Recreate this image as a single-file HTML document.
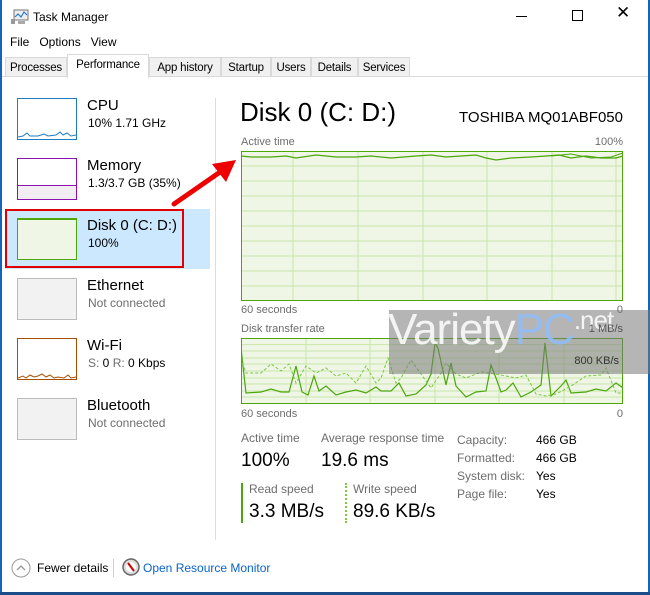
<!DOCTYPE html>
<html><head><meta charset="utf-8"><style>
*{margin:0;padding:0;box-sizing:border-box}
body{width:650px;height:595px;overflow:hidden;background:#fff;font-family:"Liberation Sans",sans-serif;position:relative;color:#000}
.a{position:absolute;white-space:nowrap}
.g{color:#6d6d6d}
.thumb{position:absolute;left:17px;width:60px;height:42px;border:1px solid #bbb;background:#f2f2f2}
.nm{font-size:15px}
.sb{font-size:12px}
.tab{position:absolute;top:57px;height:20px;border:1px solid #d9d9d9;background:#f0f0f0;font-size:11.5px;padding:4px 0 0 0;white-space:nowrap;text-align:center;letter-spacing:-0.2px;overflow:hidden}
</style></head><body>
<div class="a" style="left:0;top:0;width:2px;height:595px;background:#1565b7"></div>
<div class="a" style="right:0;top:0;width:2px;height:595px;background:#1565b7"></div>
<div class="a" style="left:0;bottom:0;width:650px;height:3px;background:#1a4d8a"></div>
<!-- title -->
<svg class="a" style="left:11px;top:9px" width="18" height="16"><rect x="3" y="1" width="14" height="10" fill="#eee" stroke="#777"/><polyline points="4,8 7,5 10,8 13,3 16,6" fill="none" stroke="#2a7ad0" stroke-width="1.2"/><rect x="0" y="10" width="4" height="5" fill="#999"/><rect x="7" y="12" width="7" height="3" fill="#aaa"/></svg>
<div class="a" style="left:33px;top:10px;font-size:12px">Task Manager</div>
<div class="a" style="left:516px;top:16px;width:11px;height:1px;background:#000"></div>
<div class="a" style="left:572px;top:10px;width:11px;height:11px;border:1px solid #000"></div>
<div class="a" style="left:616px;top:3px;font-size:17px">✕</div>
<div class="a" style="left:10px;top:35px;font-size:12px">File&nbsp;&nbsp;&nbsp;Options&nbsp;&nbsp;&nbsp;View</div>
<!-- tabs -->
<div class="a" style="left:2px;top:76px;width:646px;height:1px;background:#d9d9d9"></div>
<div class="tab" style="left:5px;width:62px">Processes</div>
<div class="tab" style="left:67px;top:54px;height:24px;width:82px;background:#fff;border-bottom:none;padding-top:4px">Performance</div>
<div class="tab" style="left:149px;width:72px">App history</div>
<div class="tab" style="left:221px;width:50px">Startup</div>
<div class="tab" style="left:271px;width:40px">Users</div>
<div class="tab" style="left:311px;width:47px">Details</div>
<div class="tab" style="left:358px;width:52px">Services</div>
<!-- left -->
<div class="a" style="left:215px;top:98px;width:1px;height:442px;background:#ddd"></div>
<div class="thumb" style="top:98px;background:#fff;border-color:#1f7bbf"><svg width="58" height="40"><polyline points="0,38 5,37 9,34 12,37 20,37 26,35 30,37 38,36 42,33 45,36 49,34 53,37 58,36" fill="none" stroke="#1f7bbf"/></svg></div>
<div class="a nm" style="left:87px;top:97px">CPU</div><div class="a sb" style="left:88px;top:116px">10% 1.71 GHz</div>
<div class="thumb" style="top:158px;background:#fff;border-color:#8b12ae"><div style="position:absolute;left:0;top:26px;width:58px;height:14px;background:#f1edf3;border-top:1px solid #8b12ae"></div></div>
<div class="a nm" style="left:87px;top:157px">Memory</div><div class="a sb" style="left:88px;top:176px">1.3/3.7 GB (35%)</div>
<div class="a" style="left:5px;top:209px;width:205px;height:60px;background:#cce8ff"></div>
<div class="a" style="left:5px;top:209px;width:179px;height:59px;border:2px solid #e00000"></div>
<div class="thumb" style="top:218px;background:#eff6e6;border-color:#4ca60c;border-top:2px solid #4ca60c"></div>
<div class="a nm" style="left:87px;top:217px">Disk 0 (C: D:)</div><div class="a sb" style="left:88px;top:236px">100%</div>
<div class="thumb" style="top:278px"></div>
<div class="a nm" style="left:87px;top:277px">Ethernet</div><div class="a sb g" style="left:88px;top:296px">Not connected</div>
<div class="thumb" style="top:338px;background:#fff;border-color:#a74f01"><svg width="58" height="40"><polyline points="0,39 5,37 8,39 12,36 16,38 20,37 24,35 28,38 32,36 36,39 40,38 46,39 50,36 53,39 58,38" fill="none" stroke="#a74f01"/></svg></div>
<div class="a nm" style="left:87px;top:337px">Wi-Fi</div><div class="a sb" style="left:88px;top:356px"><span class="g">S:</span> 0 <span class="g">R:</span> 0 Kbps</div>
<div class="thumb" style="top:398px"></div>
<div class="a nm" style="left:87px;top:397px">Bluetooth</div><div class="a sb g" style="left:88px;top:416px">Not connected</div>
<!-- arrow -->
<svg class="a" style="left:168px;top:155px" width="72" height="55"><line x1="6" y1="49" x2="55" y2="15" stroke="#e00" stroke-width="5" stroke-linecap="round"/><polygon points="68,5 44,9 58,27" fill="#e00"/></svg>
<!-- right -->
<div class="a" style="left:240px;top:97px;font-size:26px">Disk 0 (C: D:)</div>
<div class="a" style="right:27px;top:109px;font-size:15px">TOSHIBA MQ01ABF050</div>
<div class="a sb g" style="left:241px;top:136px;font-size:11px">Active time</div>
<div class="a sb g" style="right:27px;top:136px;font-size:11px">100%</div>
<svg class="a" style="left:241px;top:151px" width="382" height="150">
<rect x="0" y="0" width="382" height="150" fill="#eff6e6"/>
<g stroke="#c9e6a8" stroke-width="1">
<line x1="52" y1="0" x2="52" y2="150"/><line x1="117" y1="0" x2="117" y2="150"/><line x1="182" y1="0" x2="182" y2="150"/><line x1="246" y1="0" x2="246" y2="150"/><line x1="311" y1="0" x2="311" y2="150"/><line x1="375" y1="0" x2="375" y2="150"/>
<line x1="0" y1="15" x2="382" y2="15"/><line x1="0" y1="30" x2="382" y2="30"/><line x1="0" y1="45" x2="382" y2="45"/><line x1="0" y1="60" x2="382" y2="60"/><line x1="0" y1="75" x2="382" y2="75"/><line x1="0" y1="90" x2="382" y2="90"/><line x1="0" y1="105" x2="382" y2="105"/><line x1="0" y1="120" x2="382" y2="120"/><line x1="0" y1="135" x2="382" y2="135"/></g>
<polyline points="0,5 10,6 30,6 45,5 55,7 75,4 95,6 115,6 130,5 150,7 175,5 190,4 205,6 220,5 235,4 245,7 255,9 270,7 290,6 305,5 318,4 330,7 345,5 360,7 375,7 382,5 " fill="none" stroke="#4ca60c" stroke-width="1.2"/>
<polyline points="310,5 330,3 350,7 370,6 382,2" fill="none" stroke="#4ca60c"/>
<rect x="0.5" y="0.5" width="381" height="149" fill="none" stroke="#4ca60c"/>
</svg>
<div class="a g" style="left:241px;top:304px;font-size:11px">60 seconds</div>
<div class="a g" style="right:27px;top:304px;font-size:11px">0</div>
<div class="a g" style="left:241px;top:323px;font-size:11px">Disk transfer rate</div>
<svg class="a" style="left:241px;top:338px" width="382" height="66">
<rect x="0" y="0" width="382" height="66" fill="#eff6e6"/>
<g stroke="#c9e6a8"><line x1="65" y1="0" x2="65" y2="66"/><line x1="129" y1="0" x2="129" y2="66"/><line x1="194" y1="0" x2="194" y2="66"/><line x1="258" y1="0" x2="258" y2="66"/><line x1="323" y1="0" x2="323" y2="66"/>
<line x1="0" y1="6.6" x2="382" y2="6.6"/><line x1="0" y1="13" x2="382" y2="13"/><line x1="0" y1="20" x2="382" y2="20"/><line x1="0" y1="26" x2="382" y2="26"/><line x1="0" y1="33" x2="382" y2="33"/><line x1="0" y1="40" x2="382" y2="40"/><line x1="0" y1="46" x2="382" y2="46"/><line x1="0" y1="53" x2="382" y2="53"/><line x1="0" y1="59" x2="382" y2="59"/></g>
<polyline points="0,10 5,55 20,54 30,51 40,54 48,54 55,28 61,54 67,57 73,38 78,53 85,48 95,57 105,54 115,52 125,55 135,49 140,53 150,53 158,45 165,58 175,56 185,47 190,36 194,5 197,10 205,47 210,25 215,48 225,59 235,54 245,53 250,27 255,40 260,54 265,52 272,45 280,59 290,54 300,47 304,5 310,58 320,48 325,42 330,55 345,54 355,51 365,53 375,45 382,50" fill="none" stroke="#4ca60c" stroke-width="1.2"/>
<polyline points="0,20 5,35 20,35 30,26 40,33 48,26 55,45 65,28 75,35 85,30 95,38 105,35 115,45 125,28 135,45 140,40 147,20 155,45 160,40 170,22 180,36 190,50 200,35 205,25 215,36 225,40 240,34 260,37 275,40 285,37 295,56 305,58 315,56 330,48 345,38 360,37 365,30 375,55 382,55" fill="none" stroke="#7ac943" stroke-dasharray="3,2"/>
<rect x="0.5" y="0.5" width="381" height="65" fill="none" stroke="#4ca60c"/>
</svg>
<!-- watermark -->
<div class="a" style="left:389px;top:310px;width:261px;height:64px;background:rgba(120,120,120,0.55)"></div>
<div class="a" style="left:388px;top:305px;font-size:44px;color:rgba(255,255,255,0.85);letter-spacing:-1px">Variety<span style="color:rgba(140,190,255,0.8)">PC</span><span style="font-size:26px;vertical-align:top">.net</span></div>
<div class="a" style="right:27px;top:323px;font-size:11px;color:#555">1 MB/s</div>
<div class="a" style="right:31px;top:355px;font-size:11px;color:#333">800 KB/s</div>
<div class="a g" style="left:241px;top:408px;font-size:11px">60 seconds</div>
<div class="a g" style="right:27px;top:408px;font-size:11px">0</div>
<!-- stats -->
<div class="a g" style="left:241px;top:431px;font-size:12px">Active time</div>
<div class="a g" style="left:321px;top:431px;font-size:12px">Average response time</div>
<div class="a" style="left:241px;top:450px;font-size:19px">100%</div>
<div class="a" style="left:321px;top:450px;font-size:19px">19.6 ms</div>
<div class="a" style="left:241px;top:483px;width:2px;height:40px;background:#4ca60c"></div>
<div class="a" style="left:345px;top:483px;width:0;height:40px;border-left:2px dotted #7ac943"></div>
<div class="a g" style="left:249px;top:482px;font-size:12px">Read speed</div>
<div class="a g" style="left:353px;top:482px;font-size:12px">Write speed</div>
<div class="a" style="left:249px;top:501px;font-size:19px">3.3 MB/s</div>
<div class="a" style="left:353px;top:501px;font-size:19px">89.6 KB/s</div>
<div class="a g" style="left:457px;top:431px;font-size:12px;line-height:18px">Capacity:<br>Formatted:<br>System disk:<br>Page file:</div>
<div class="a" style="left:536px;top:431px;font-size:12px;line-height:18px">466 GB<br>466 GB<br>Yes<br>Yes</div>
<!-- footer -->
<svg class="a" style="left:11px;top:558px" width="20" height="20"><circle cx="10" cy="10" r="9" fill="none" stroke="#999"/><polyline points="6,12 10,8 14,12" fill="none" stroke="#999" stroke-width="1.3"/></svg>
<div class="a" style="left:37px;top:561px;font-size:12px">Fewer details</div>
<div class="a" style="left:113px;top:559px;width:1px;height:18px;background:#ccc"></div>
<svg class="a" style="left:122px;top:558px" width="18" height="18"><circle cx="9" cy="9" r="8" fill="#ddd" stroke="#666" stroke-width="1.5"/><circle cx="9" cy="9" r="5" fill="#fff"/><line x1="6" y1="5" x2="12" y2="13" stroke="#c00" stroke-width="2"/></svg>
<div class="a" style="left:143px;top:561px;font-size:12px;color:#0a63c9">Open Resource Monitor</div>
</body></html>
